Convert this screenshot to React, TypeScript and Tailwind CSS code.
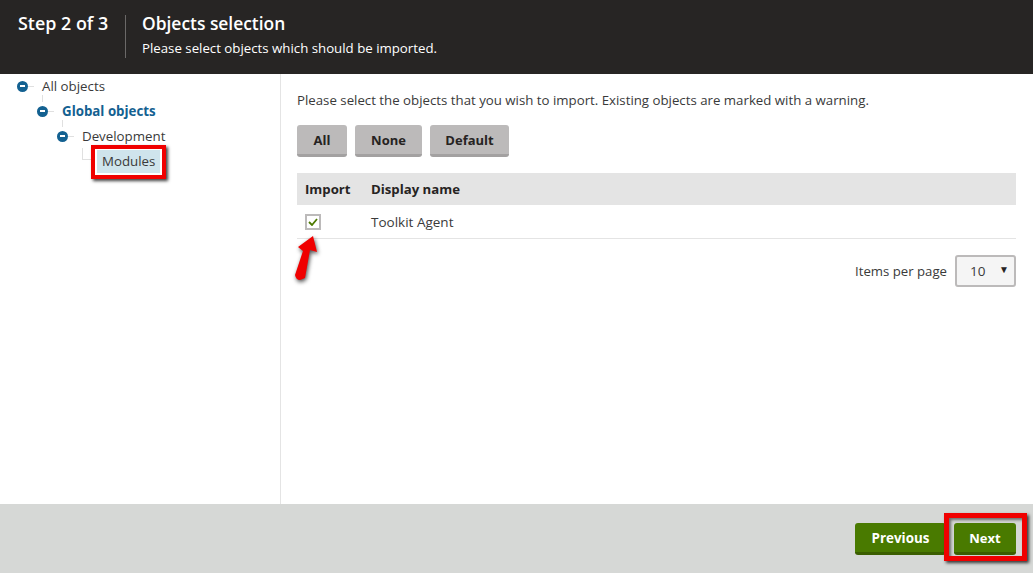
const font = "font-['Open_Sans',sans-serif]";

function Minus() {
  return (
    <span className="mt-[-1px] flex h-[11px] w-[11px] shrink-0 items-center justify-center rounded-full bg-[#136191]">
      <span className="h-[2px] w-[5px] bg-white" />
    </span>
  );
}

function TreeRow({ indent, label, bold, first }: { indent: string; label: string; bold?: boolean; first?: boolean }) {
  return (
    <div className={`relative flex h-[25px] items-center ${indent}`}>
      {!first && <span className="absolute left-[5px] top-[-4px] h-[7px] w-px bg-[#e0e0e0]" />}
      <Minus />
      <span className="mt-[-1px] h-px w-[6px] bg-[#e0e0e0]" />
      <span className={bold ? "ml-[8px] font-bold text-[#136191]" : "ml-[8px] text-[#3a3a3a]"}>{label}</span>
    </div>
  );
}

function GrayButton({ label, width }: { label: string; width: string }) {
  return (
    <button className={`h-[32px] rounded-[3px] border-b-[3px] border-[#a3a1a1] bg-[#bcbaba] pt-[3px] text-[13px] font-bold text-[#262322] ${width}`}>
      {label}
    </button>
  );
}

function GreenButton({ label, className }: { label: string; className: string }) {
  return (
    <button className={`h-[32px] rounded-[3px] border-b-[3px] border-[#3b5e00] bg-[#497a00] pt-[3px] font-bold text-white ${className}`}>
      {label}
    </button>
  );
}

export default function App() {
  return (
    <div className={`flex h-[573px] w-[1033px] flex-col overflow-hidden bg-white text-[13.3px] ${font}`}>
      <header className="flex h-[74px] shrink-0 items-start bg-[#272524] text-white">
        <div className="mt-[15px] h-[43px] w-[126px] border-r border-[#6b6968] pl-[18px]">
          <div className="mt-[-1px] text-[17.9px] font-semibold leading-[18px]">Step 2 of 3</div>
        </div>
        <div className="mt-[14px] pl-[16px]">
          <div className="text-[17.4px] font-semibold leading-[18px]">Objects selection</div>
          <div className="mt-[7px] text-[13.25px] leading-[18px]">Please select objects which should be imported.</div>
        </div>
      </header>

      <main className="flex min-h-0 flex-1">
        <aside className="w-[281px] shrink-0 border-r border-[#e4e4e4] pl-[17px]">
          <TreeRow indent="" label="All objects" first />
          <TreeRow indent="ml-[20px]" label="Global objects" bold />
          <TreeRow indent="ml-[40px]" label="Development" />
          <div className="relative ml-[65px] flex h-[25px] items-center">
            <span className="absolute left-0 top-[-1px] h-[12px] w-[9px] border-b border-l border-[#e0e0e0]" />
            <span className="relative ml-[9px] border-[4px] border-[#f00000] shadow-[2px_2px_3px_rgba(0,0,0,0.75)]">
              <span className="block border-2 border-t-[1px] border-white bg-[#cfe4ec] px-[5px] leading-[23px] text-[#3a3a3a]">Modules</span>
            </span>
          </div>
        </aside>

        <section className="flex-1 pl-[16px] pr-[17px]">
          <p className="mt-[16px] text-[13.25px] leading-[20px] text-[#3a3a3a]">
            Please select the objects that you wish to import. Existing objects are marked with a warning.
          </p>
          <div className="mt-[15px] flex gap-[8px]">
            <GrayButton label="All" width="w-[50px]" />
            <GrayButton label="None" width="w-[67px]" />
            <GrayButton label="Default" width="w-[79px]" />
          </div>
          <div className="mt-[16px] flex h-[32px] items-center bg-[#e4e4e4] pt-[1px] text-[13.2px] font-bold text-[#262322]">
            <span className="w-[74px] pl-[8px]">Import</span>
            <span>Display name</span>
          </div>
          <div className="relative flex h-[34px] items-center border-b border-[#e4e4e4] text-[#3a3a3a]">
            <span className="ml-[8px] flex h-[16px] w-[16px] items-center justify-center border-2 border-[#bcbaba] bg-white">
              <svg width="10" height="8" viewBox="0 0 10 8">
                <path d="M1 4l3 3 5-6" fill="none" stroke="#4d7a00" strokeWidth="1.8" />
              </svg>
            </span>
            <span className="ml-[50px] mt-[1px] text-[13.5px]">Toolkit Agent</span>
            <svg
              className="absolute left-[-7px] top-[29px] drop-shadow-[1px_2px_2px_rgba(0,0,0,0.7)]"
              width="34"
              height="50"
              viewBox="0 0 34 50"
            >
              <path d="M23 2 L8 13 L13 17 L5 41 Q6 46 10 46 L15 44 L20 16 L27 18 Z" fill="#f00000" />
            </svg>
          </div>
          <div className="mt-[16px] flex items-center justify-end gap-[8px] text-[#3a3a3a]">
            <span className="pt-[2px] text-[13.2px]">Items per page</span>
            <div className="flex h-[32px] w-[61px] items-center rounded-[3px] border-2 border-[#bcbaba] bg-[#f5f5f5] pl-[13px]">
              <span className="flex-1 text-[13.5px]">10</span>
              <span className="mb-[3px] mr-[5px] text-[10px] text-[#262322]">▼</span>
            </div>
          </div>
        </section>
      </main>

      <footer className="flex h-[69px] shrink-0 items-center justify-end bg-[#d6d8d6] pr-[17px]">
        <div className="flex items-center gap-[8px]">
          <GreenButton label="Previous" className="w-[91px] text-[13.4px]" />
          <div className="relative">
            <GreenButton label="Next" className="block w-[62px] text-[13px]" />
            <span className="pointer-events-none absolute bottom-[-6px] left-[-10px] right-[-11px] top-[-10px] border-[5px] border-[#f00000] shadow-[2px_2px_3px_rgba(0,0,0,0.75),inset_2px_2px_3px_rgba(0,0,0,0.5)]" />
          </div>
        </div>
      </footer>
    </div>
  );
}
